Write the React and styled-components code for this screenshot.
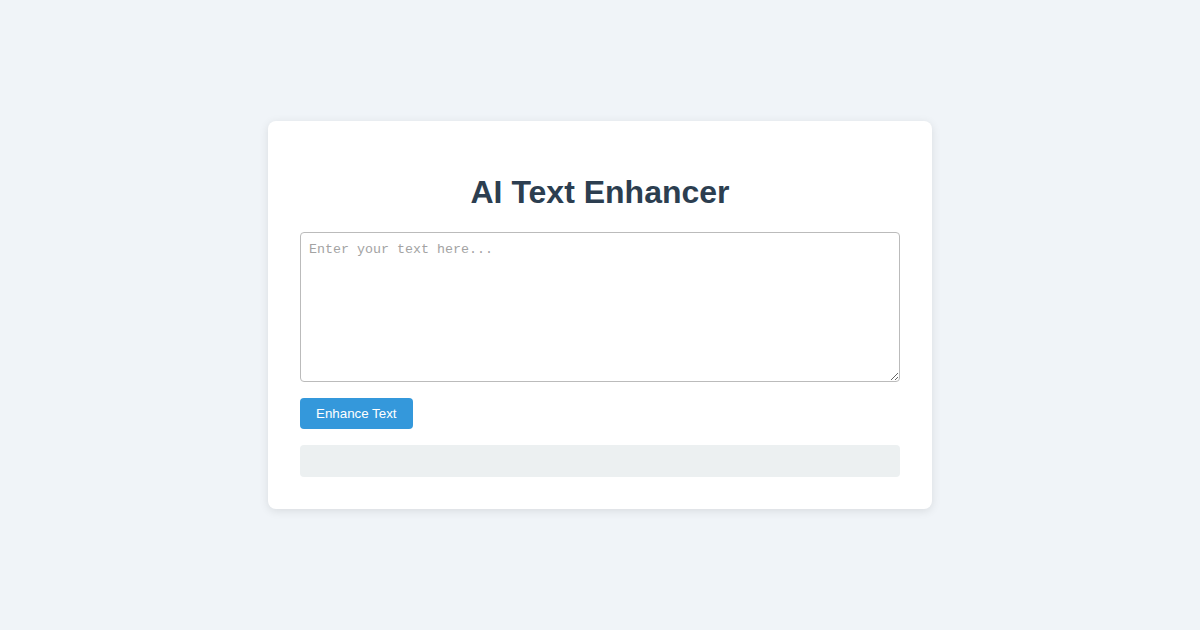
import React, { useState } from "react";
import styled, { createGlobalStyle } from "styled-components";

const GlobalStyle = createGlobalStyle`
  body {
    margin: 0;
    background-color: #f0f4f8;
    font-family: "Liberation Sans", Arial, sans-serif;
  }
`;

const Page = styled.div`
  display: flex;
  align-items: center;
  justify-content: center;
  min-height: 100vh;
`;

const Card = styled.div`
  background: #ffffff;
  width: 600px;
  padding: 32px;
  border-radius: 8px;
  box-shadow: 0 2px 10px rgba(0, 0, 0, 0.1);
`;

const Title = styled.h1`
  font-size: 32px;
  margin: 0.67em 0;
  text-align: center;
  color: #2c3e50;
`;

const TextArea = styled.textarea`
  display: block;
  width: 100%;
  height: 150px;
  box-sizing: border-box;
  padding: 9px 8px 7px;
  margin-bottom: 16px;
  border: 1px solid #bbbbbb;
  border-radius: 4px;
  font-family: "Liberation Mono", "Courier New", monospace;
  font-size: 13.33px;
  &::placeholder {
    color: #a3a3a3;
  }
`;

const Button = styled.button`
  background-color: #3498db;
  color: #ffffff;
  border: none;
  border-radius: 4px;
  padding: 8px 16px;
  font-family: "Liberation Sans", Arial, sans-serif;
  font-size: 13.33px;
  line-height: 15px;
  cursor: pointer;
  &:hover {
    background-color: #2980b9;
  }
`;

const Result = styled.div`
  margin-top: 16px;
  padding: 16px;
  background-color: #ecf0f1;
  border-radius: 4px;
  white-space: pre-wrap;
`;

export default function App() {
  const [text, setText] = useState("");
  const [result, setResult] = useState("");

  return (
    <Page>
      <GlobalStyle />
      <Card>
        <Title>AI Text Enhancer</Title>
        <TextArea
          placeholder="Enter your text here..."
          value={text}
          onChange={(e) => setText(e.target.value)}
        />
        <Button type="button" onClick={() => setResult(text)}>
          Enhance Text
        </Button>
        <Result>{result}</Result>
      </Card>
    </Page>
  );
}
